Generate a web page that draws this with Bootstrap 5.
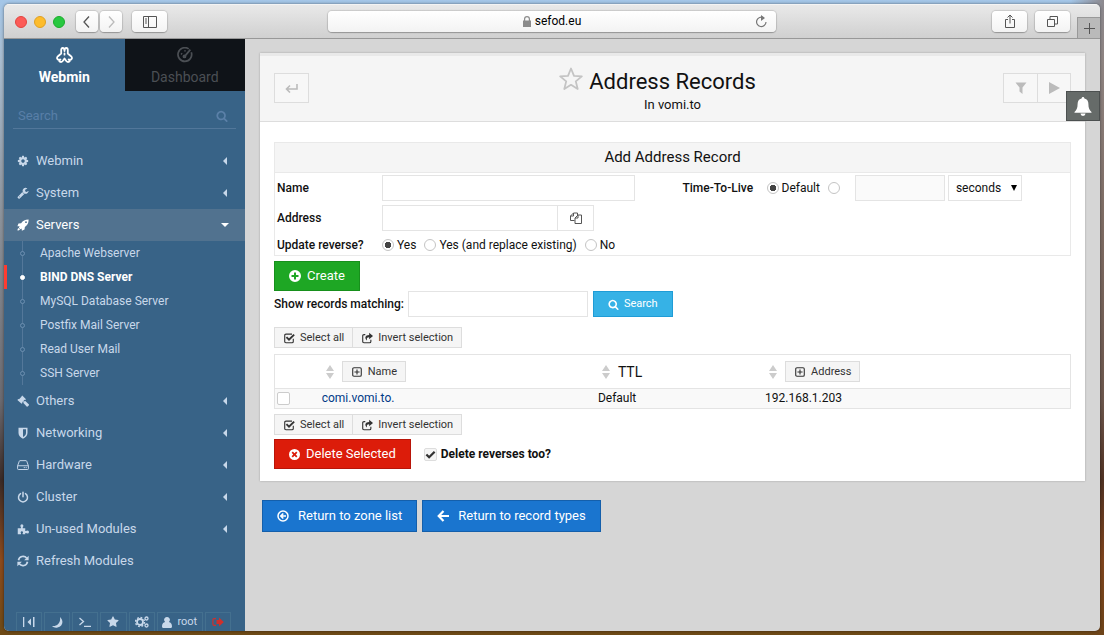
<!DOCTYPE html>
<html lang="en">
<head>
<meta charset="utf-8">
<meta name="viewport" content="width=device-width, initial-scale=1">
<title>Address Records</title>
<link href="https://cdn.jsdelivr.net/npm/bootstrap@5.3.0/dist/css/bootstrap.min.css" rel="stylesheet">
<style>
  body { font-family: Roboto, "Liberation Sans", sans-serif; font-size: 12px; line-height: 20px; color: #111; padding: 4px;
    background: linear-gradient(90deg, transparent 97%, rgba(110,60,30,.45) 100%), linear-gradient(180deg, #a4c6e8 0, #a9bdd0 60px, #8b9199 220px, #6b6a70 400px, #3a2a26 480px, #8c4a1c 560px, #6d4a16 100%); }
  .ico { width: 1em; height: 1em; fill: currentColor; flex: none; }
  .ico-11 { width: 11px; height: 11px; }
  .ico-12 { width: 12px; height: 12px; }
  .line-ico { fill: none; stroke: currentColor; }
  .win { min-height: calc(100vh - 8px); border-radius: 5px; overflow: hidden; background: #d6d6d6; box-shadow: 0 0 3px rgba(0,0,0,.5); }
  .side-even { flex: 1 1 0; }

  /* browser toolbar */
  .chrome { height: 35px; padding: 0 11px; background: linear-gradient(#e9e9e9, #d0d0d0); border-top: 1px solid #f4f4f4; border-bottom: 1px solid #989898; }
  .lights { gap: 7px; margin-right: 11px; }
  .light { width: 12px; height: 12px; border-radius: 50%; border: 1px solid; }
  .light-red { background: #fc5b57; border-color: #e2443f; }
  .light-amber { background: #fdbc2c; border-color: #dfa023; }
  .light-green { background: #28c840; border-color: #1bac2c; }
  .tool { width: 35px; height: 21px; padding: 0; border: 0; border-radius: 4px; color: #555; background: linear-gradient(#fff, #f3f3f3); box-shadow: 0 0 1px 1px rgba(0,0,0,.12), 0 1px 1px rgba(0,0,0,.2); display: flex; align-items: center; justify-content: center; }
  .tool-nav { width: 22px; font-size: 12px; }
  .tool-nav.faded { color: #bbb; }
  .nav-pair { gap: 2px; margin-right: 10px; }
  .address { width: 448px; font-size: 12px; line-height: 21px; color: #000; }
  .tools-end .tool:last-child { margin-right: 19px; }
  .newtab { width: 23px; height: 21px; padding: 0; border: 1px solid #999; border-width: 1px 0 0 1px; background: #bababa; color: #555; }

  /* sidebar */
  .side { width: 241px; flex: none; background: #386387; color: #c8d8ea; font-size: 13px; }
  .side a { color: inherit; text-decoration: none; }
  .side-tab { height: 52px; width: 50%; font-size: 14px; }
  .side-tab.off { background: #0f1318; color: #4b4f54; }
  .side-tab.on { color: #fff; font-weight: 700; }
  .side-search { margin: 13px 9px 0; height: 25px; border-bottom: 1px solid #52779a; color: #5b80a8; }
  .side-search input { background: none; border: 0; outline: 0; min-width: 0; font-size: 13px; padding: 0 0 0 5px; color: #fff; }
  .side-search input::placeholder { color: #587fa8; opacity: 1; }
  .menu-row { height: 32px; padding: 0 16px 0 13px; gap: 7px; }
  .menu-row .ico { width: 12px; height: 12px; }
  .menu-row .caret { width: 8px; height: 8px; margin-left: auto; }
  .menu-row.open { background: #51728f; color: #fff; }
  .submenu a { height: 24px; padding-left: 16px; gap: 15px; font-size: 12px; border-left: 3px solid transparent; background: linear-gradient(#54789a, #54789a) 15px 0 / 1px 100% no-repeat; }
  .submenu a::before { content: ""; width: 5px; height: 5px; margin-left: -3px; border: 1px solid #6c8fb0; border-radius: 50%; background: #386387; flex: none; }
  .submenu a.now { color: #fff; font-weight: 700; border-left-color: #ff3b30; }
  .submenu a.now::before { background: #fff; border-color: #fff; }
  .side-foot { padding: 0 14px 0 12px; gap: 2px; }
  .side-foot button { height: 19px; padding: 0; flex: 1 1 26px; border: 1px solid #44708f; border-bottom: 0; background: none; color: #c8d8ea; font-size: 11px; line-height: 18px; display: flex; align-items: center; justify-content: center; gap: 5px; }
  .side-foot button.wide { flex-basis: 46px; }
  .side-foot button.leave { color: #d0302c; }

  /* page */
  .page { padding: 14px 15px 20px; min-width: 0; }
  .panel { background: #fff; border: 0; border-radius: 0; box-shadow: 0 0 2px rgba(0,0,0,.25); }
  .panel-head { height: 69px; padding: 17px 14px 0; background: #f5f5f5; border-top: 3px solid #e9e9e9; border-bottom: 1px solid #ddd; display: grid; grid-template-columns: 1fr auto 1fr; gap: 6px; }
  .panel-head h1 { font-size: 22px; line-height: 26px; font-weight: 400; margin: -4px 0 0; }
  .panel-head p { font-size: 13px; line-height: 20px; margin: 0; }
  .fav { margin-top: -6px; }
  .ghost { height: 30px; width: 35px; padding: 0; border: 1px solid #ddd; background: #f7f7f7; color: #bbb; border-radius: 0; display: flex; align-items: center; justify-content: center; }
  .ghost + .ghost { width: 33px; }
  .panel-main { padding: 20px 14px 12px; }
  .box { border: 1px solid #e9e9e9; }
  .box-head { font-size: 15px; line-height: 29px; background: #f5f5f5; border-bottom: 1px solid #e9e9e9; margin: 0; font-weight: 400; text-align: center; }
  .form-side { padding: 2px 0 0 2px; display: flex; flex-direction: column; gap: 4px; }
  .form-side.second { padding-left: 10px; }
  .key { font-weight: 500; }
  .key-col { width: 105px; flex: none; }
  .key-ttl { width: 84px; flex: none; }
  .field { height: 26px; border: 1px solid #e4e4e4; border-radius: 0; background: #fff; padding: 0 6px; min-width: 0; color: #111; font-size: 12px; }
  .field:disabled { background: #fafafa; }
  .w-name { width: 253px; }
  .w-addr { width: 176px; }
  .w-pick { width: 36px; }
  .w-time { width: 90px; margin: 0 3px 0 12px; }
  .w-match { width: 180px; margin-right: 5px; }
  select.field { appearance: none; width: 74px; padding: 0 7px; background: #fff url("data:image/svg+xml,%3Csvg xmlns='http://www.w3.org/2000/svg' viewBox='0 0 6 6'%3E%3Cpath d='M0 0h6L3 6z'/%3E%3C/svg%3E") right 4px center / 6px 6px no-repeat; }
  input[type=radio] { appearance: none; width: 12px; height: 12px; margin: 0 3px 0 0; border: 1px solid #c4c4c4; border-radius: 50%; background: #fff; flex: none; }
  input[type=radio]:checked { background: radial-gradient(circle, #444 0 3px, #fff 3px); }
  input[type=checkbox] { appearance: none; width: 13px; height: 13px; margin: 0; border: 1px solid #ccc; border-radius: 2px; background: #fff; flex: none; }
  input[type=checkbox]:checked { border-color: #ddd; background: #f5f5f5 url("data:image/svg+xml,%3Csvg xmlns='http://www.w3.org/2000/svg' viewBox='0 0 12 12'%3E%3Cpath d='M1.500 6l3 3 6-6' fill='none' stroke='%23333' stroke-width='2.500'/%3E%3C/svg%3E") center / 11px 11px no-repeat; }
  .act { border-radius: 0; padding: 0 14px; height: 30px; font-size: 13px; line-height: 20px; color: #fff; display: inline-flex; align-items: center; gap: 6px; border: 1px solid; }
  .act:hover { color: #fff; }
  .act-green { background: #1ea724; border-color: #17901c; margin-top: 5px; }
  .act-red { background: #dc1c0a; border-color: #b81509; }
  .act-sky { background: #36b2e6; border-color: #1f9cd6; height: 26px; font-size: 11px; gap: 5px; }
  .act-blue { background: #1a75cf; border-color: #145fab; height: 32px; gap: 9px; }
  .mini { border-radius: 0; border: 1px solid #ddd; background: #f5f5f5; color: #333; height: 21px; padding: 0 8px; font-size: 11px; line-height: 19px; display: inline-flex; align-items: center; gap: 5px; }
  .mini .ico { width: 12px; height: 12px; }
  .picks { margin-top: 10px; }
  .records { --bs-table-bg: transparent; margin: 6px 0 5px; border: 1px solid #e4e4e4; font-size: 12px; table-layout: fixed; color: #111; }
  .records > :not(caption) > * > * { padding: 0 5px; border-color: #e4e4e4; }
  .records th { height: 34px; font-weight: 400; font-size: 14px; vertical-align: middle; }
  .records td { height: 20px; background: #f9f9f9; line-height: 19px; }
  .records td:first-child { padding-left: 2px; }
  .records a { color: #003a87; text-decoration: none; }
  .col-pick { width: 5.300%; } .col-name { width: 34.700%; } .col-ttl { width: 21%; }
  .sort { width: 8px; height: 14px; fill: #ccc; flex: none; }
  .too { margin-left: 13px; gap: 4px; }
  .returns { gap: 5px; padding-left: 2px; margin-top: 19px; }
  .bell { position: absolute; right: 0; top: 87px; width: 34px; height: 30px; padding: 0; border: 1px solid #4c5050; background: #666b69; color: #fff; z-index: 2; }
</style>
</head>
<body>
<svg class="d-none" xmlns="http://www.w3.org/2000/svg">
  <symbol id="cog" viewBox="0 0 1792 1792"><path d="M1152 896q0-106-75-181t-181-75-181 75-75 181 75 181 181 75 181-75 75-181zm512-109v222q0 12-8 23t-20 13l-185 28q-19 54-39 91 35 50 107 138 10 12 10 25t-9 23q-27 37-99 108t-94 71q-12 0-26-9l-138-108q-44 23-91 38-16 136-29 186-7 28-36 28h-222q-14 0-24.500-8.500t-11.500-21.500l-28-184q-49-16-90-37l-141 107q-10 9-25 9-14 0-25-11-126-114-165-168-7-10-7-23 0-12 8-23 15-21 51-66.500t54-70.500q-27-50-41-99l-183-27q-13-2-21-12.500t-8-23.500v-222q0-12 8-23t19-13l186-28q14-46 39-92-40-57-107-138-10-12-10-24 0-10 9-23 26-36 98.500-107.500t94.500-71.500q13 0 26 10l138 107q44-23 91-38 16-136 29-186 7-28 36-28h222q14 0 24.500 8.500t11.500 21.500l28 184q49 16 90 37l142-107q9-9 24-9 13 0 25 10 129 119 165 170 7 8 7 22 0 12-8 23-15 21-51 66.500t-54 70.500q26 50 41 98l183 28q13 2 21 12.500t8 23.500z"/></symbol>
  <symbol id="wrench" viewBox="0 0 1792 1792"><path d="M448 1472q0-26-19-45t-45-19-45 19-19 45 19 45 45 19 45-19 19-45zm644-420l-682 682q-37 37-90 37-52 0-91-37l-106-108q-38-36-38-90 0-53 38-91l681-681q39 98 114.500 173.500t173.500 114.500zm634-435q0 39-23 106-47 134-164.500 217.500t-258.500 83.500q-185 0-316.500-131.500t-131.500-316.500 131.500-316.500 316.500-131.500q58 0 121.500 16.500t107.500 46.500q16 11 16 28t-16 28l-293 169v224l193 107q5-3 79-48.500t135.500-81 70.500-35.500q15 0 23.500 10t8.500 25z"/></symbol>
  <symbol id="search" viewBox="0 0 1792 1792"><path d="M1216 832q0-185-131.500-316.500t-316.500-131.500-316.500 131.500-131.500 316.500 131.500 316.500 316.500 131.500 316.500-131.500 131.500-316.500zm512 832q0 52-38 90t-90 38q-54 0-90-38l-343-342q-179 124-399 124-143 0-273.500-55.500t-225-150-150-225-55.500-273.500 55.500-273.500 150-225 225-150 273.500-55.500 273.500 55.500 225 150 150 225 55.500 273.500q0 220-124 399l343 343q37 37 37 90z"/></symbol>
  <symbol id="star" viewBox="0 0 1792 1792"><path d="M1728 647q0 22-26 48l-363 354 86 500q1 7 1 20 0 21-10.500 35.500t-30.500 14.500q-19 0-40-12l-449-236-449 236q-22 12-40 12-21 0-31.500-14.500t-10.500-35.500q0-6 2-20l86-500-364-354q-25-27-25-48 0-37 56-46l502-73 225-455q19-41 49-41t49 41l225 455 502 73q56 9 56 46z"/></symbol>
  <symbol id="rocket" viewBox="0 0 16 16"><path fill-rule="evenodd" d="M15.500.5c-5 0-7.500 1.500-10 5L2 6 .5 9.500l3 .3-1 1.700 2 2 1.700-1 .3 3L10 14l.5-3.500C14 8 15.500 5.500 15.500.5zM12 3a1.200 1.200 0 1 1 0 2.400A1.200 1.200 0 0 1 12 3zM2 12c-1 .7-1.300 2-1.300 3.300C2 15.300 3.300 15 4 14z"/></symbol>
  <symbol id="gavel" viewBox="0 0 16 16"><path d="M7 .5 12 5.500l-1.200 1.200-.8-.3-1.200 1.200.9.9 1-.9L16 12.700c.4 1-1.800 3.200-2.800 2.800L8.200 10.300l.9-1-.9-.9L7 9.600l.3.900-1.200 1.200L.5 6.500l1.200-1.200 1 .3L6.200 2 5.900 1.500z"/></symbol>
  <symbol id="shield" viewBox="0 0 16 16"><path fill-rule="evenodd" d="M2 1h12v7c0 4-3 6-6 7.500C5 14 2 12 2 8zm6 2v10.200C10.500 12 12 10.300 12 8V3z"/></symbol>
  <symbol id="disk" viewBox="0 0 16 16"><path fill="none" stroke="currentColor" stroke-width="1.300" d="M.8 9 3 3q.3-.8 1-.8h8q.7 0 1 .8l2.200 6v4q0 1-1 1H1.800q-1 0-1-1zm0 0h14.400M9 11.500h1.500m1 0H13"/></symbol>
  <symbol id="power" viewBox="0 0 16 16"><path fill="none" stroke="currentColor" stroke-width="2" stroke-linecap="round" d="M8 1.500v6M4.700 3.500a6 6 0 1 0 6.600 0"/></symbol>
  <symbol id="puzzle" viewBox="0 0 16 16"><path d="M1 7h4.200C6 6 4.500 5 4.500 3.500a2 2 0 0 1 4 0C8.500 5 7 6 7.800 7H11v3.500c1 .8 2-.5 3-.5a2 2 0 0 1 0 4c-1 0-2-1.300-3-.5V15H7.800c-1-1 .3-1.700.3-2.700a1.700 1.700 0 0 0-3.300 0c0 1 1.300 1.700.3 2.700H1z"/></symbol>
  <symbol id="refresh" viewBox="0 0 16 16"><path fill="none" stroke="currentColor" stroke-width="2.200" d="M2 7a6.200 6.200 0 0 1 11-2.800M14 9a6.200 6.200 0 0 1-11 2.800"/><path d="M15.500 1v6h-6zM.5 15V9h6z"/></symbol>
  <symbol id="left" viewBox="0 0 8 8"><path d="M6 0v8L2 4z"/></symbol>
  <symbol id="down" viewBox="0 0 8 8"><path d="M0 2h8L4 6z"/></symbol>
  <symbol id="updown" viewBox="0 0 8 14"><path d="M0 6h8L4 0zM0 8h8l-4 6z"/></symbol>
  <symbol id="check" viewBox="0 0 14 14"><path fill="none" stroke="currentColor" stroke-width="1.300" d="M12 8v3q0 1.500-1.500 1.500h-7Q2 12.500 2 11V4q0-1.500 1.500-1.500h7"/><path fill="none" stroke="currentColor" stroke-width="2.200" d="m4 6 3 3 6-6"/></symbol>
  <symbol id="invert" viewBox="0 0 14 14"><path fill="none" stroke="currentColor" stroke-width="1.300" d="M11.500 9v2q0 1.500-1.500 1.500H3.500Q2 12.500 2 11V4.500Q2 3 3.500 3H5"/><path d="M9.500 1 14 4.700 9.500 8.400V6C7 6 6.500 7 7 10 4 7 4.500 3.500 9.500 3.400z"/></symbol>
  <symbol id="plusbox" viewBox="0 0 14 14"><path fill="none" stroke="currentColor" stroke-width="1.300" d="M3.500 2h7Q12 2 12 3.500v7q0 1.500-1.500 1.500h-7Q2 12 2 10.500v-7Q2 2 3.500 2zM7 4v6M4 7h6"/></symbol>
</svg>

<div class="win d-flex flex-column position-relative">
  <header class="chrome d-flex align-items-center flex-shrink-0 position-relative">
    <div class="side-even d-flex align-items-center">
      <div class="lights d-flex">
        <span class="light light-red"></span>
        <span class="light light-amber"></span>
        <span class="light light-green"></span>
      </div>
      <div class="nav-pair d-flex">
        <button class="tool tool-nav" aria-label="Back"><svg class="ico line-ico" viewBox="0 0 12 12" stroke-width="1.300"><path d="M8 .5 3 6l5 5.500"/></svg></button>
        <button class="tool tool-nav faded" aria-label="Forward"><svg class="ico line-ico" viewBox="0 0 12 12" stroke-width="1.300"><path d="m4 .5 5 5.500-5 5.500"/></svg></button>
      </div>
      <button class="tool" aria-label="Sidebar"><svg width="14" height="12" viewBox="0 0 14 12" fill="none" stroke="currentColor"><path d="M.5.5h13v11H.5zm5 0v11M2 3h2M2 5h2M2 7h2"/></svg></button>
    </div>
    <div class="tool address px-2">
      <span class="side-even"></span>
      <svg class="me-1" width="8" height="11" viewBox="0 0 8 11" fill="#8b8b8b"><path fill-rule="evenodd" d="M0 4.500h1V3a3 3 0 0 1 6 0v1.500h1V11H0zm2.200 0h3.600V3a1.800 1.800 0 0 0-3.600 0z"/></svg>
      <span>sefod.eu</span>
      <span class="side-even d-flex justify-content-end"><svg width="13" height="13" viewBox="0 0 13 13" fill="none" stroke="#777" stroke-width="1.200"><path d="M8.500 2.700A4.700 4.700 0 1 0 11 7"/><path fill="#777" stroke="none" d="m6 0 4 3-4 3z"/></svg></span>
    </div>
    <div class="side-even tools-end d-flex gap-2 justify-content-end">
      <button class="tool" aria-label="Share"><svg width="12" height="15" viewBox="0 0 12 15" fill="none" stroke="currentColor"><path d="M4 5.500H1.500v8h9v-8H8M6 9.500V1M3.500 3.500 6 1l2.500 2.500"/></svg></button>
      <button class="tool" aria-label="Tabs"><svg width="13" height="13" viewBox="0 0 13 13" fill="none" stroke="currentColor"><path d="M1.500 4.500h7v7h-7zm2.500 0v-3h7.500v7.500h-3"/></svg></button>
    </div>
    <button class="newtab d-flex align-items-center justify-content-center position-absolute bottom-0 end-0" aria-label="New tab"><svg width="11" height="11" viewBox="0 0 11 11" stroke="currentColor"><path d="M5.500 0v11M0 5.500h11"/></svg></button>
  </header>
  <button class="bell d-flex align-items-center justify-content-center" aria-label="Notifications"><svg width="18" height="19" viewBox="0 0 18 19" fill="currentColor"><path d="M9 0c.8 0 1.400.6 1.400 1.500 3 .7 4 3 4 5.500 0 4 1 6 3.100 8v.8h-17V15c2.100-2 3.100-4 3.100-8 0-2.500 1-4.800 4-5.500C7.600.6 8.200 0 9 0zM6.500 16.500h5a2.500 2.500 0 0 1-5 0z"/></svg></button>

  <div class="d-flex flex-grow-1">
    <nav class="side d-flex flex-column">
      <div class="d-flex">
        <a href="#" class="side-tab on d-flex flex-column align-items-center pt-2"><svg width="17" height="16" viewBox="0 0 17 16" fill="none" stroke="#fff" stroke-width="1.800" stroke-linejoin="round" stroke-linecap="round"><path d="M5.200 6.500V3Q5.200 1 6.700 1 8.500 1 8.500 4 8.500 1 10.300 1q1.500 0 1.500 2v3.500l3.200 2.700q1.500 1.400.6 2.700t-3 .6q2 1.500.4 2.300-1.500.7-2.700-.8L8.500 11.500 6.700 14q-1.200 1.500-2.700.8-1.600-.8.4-2.300-2.100.7-3-.6T2 9.200zM8.500 6.500v1.200"/></svg><span class="mt-1">Webmin</span></a>
        <a href="#" class="side-tab off d-flex flex-column align-items-center pt-2"><svg width="16" height="16" viewBox="0 0 15 15" fill="none" stroke="currentColor" stroke-width="1.600"><path d="M11 1.800A6.400 6.400 0 1 0 13.400 5M7 9l5.500-6.500M3.800 6l1 .8M7.500 3v1.200"/><circle cx="7" cy="8.800" r="1"/></svg><span class="mt-1">Dashboard</span></a>
      </div>
      <div class="side-search d-flex align-items-center justify-content-between pe-2">
        <input type="search" placeholder="Search" aria-label="Search">
        <svg class="ico ico-12"><use href="#search"/></svg>
      </div>
      <div class="mt-3 pb-2">
        <a href="#" class="menu-row d-flex align-items-center"><svg class="ico"><use href="#cog"/></svg>Webmin<svg class="ico caret"><use href="#left"/></svg></a>
        <a href="#" class="menu-row d-flex align-items-center"><svg class="ico"><use href="#wrench"/></svg>System<svg class="ico caret"><use href="#left"/></svg></a>
        <a href="#" class="menu-row open d-flex align-items-center"><svg class="ico"><use href="#rocket"/></svg>Servers<svg class="ico caret"><use href="#down"/></svg></a>
        <div class="submenu">
          <a href="#" class="d-flex align-items-center">Apache Webserver</a>
          <a href="#" class="d-flex align-items-center now">BIND DNS Server</a>
          <a href="#" class="d-flex align-items-center">MySQL Database Server</a>
          <a href="#" class="d-flex align-items-center">Postfix Mail Server</a>
          <a href="#" class="d-flex align-items-center">Read User Mail</a>
          <a href="#" class="d-flex align-items-center">SSH Server</a>
        </div>
        <a href="#" class="menu-row d-flex align-items-center"><svg class="ico"><use href="#gavel"/></svg>Others<svg class="ico caret"><use href="#left"/></svg></a>
        <a href="#" class="menu-row d-flex align-items-center"><svg class="ico"><use href="#shield"/></svg>Networking<svg class="ico caret"><use href="#left"/></svg></a>
        <a href="#" class="menu-row d-flex align-items-center"><svg class="ico"><use href="#disk"/></svg>Hardware<svg class="ico caret"><use href="#left"/></svg></a>
        <a href="#" class="menu-row d-flex align-items-center"><svg class="ico"><use href="#power"/></svg>Cluster<svg class="ico caret"><use href="#left"/></svg></a>
        <a href="#" class="menu-row d-flex align-items-center"><svg class="ico"><use href="#puzzle"/></svg>Un-used Modules<svg class="ico caret"><use href="#left"/></svg></a>
        <a href="#" class="menu-row d-flex align-items-center"><svg class="ico"><use href="#refresh"/></svg>Refresh Modules</a>
      </div>
      <div class="side-foot d-flex mt-auto">
        <button aria-label="Collapse"><svg width="12" height="10" viewBox="0 0 12 10" fill="currentColor"><path d="M0 0h1.300v10H0zm10 0h1.500v10H10zM8 1.500v7L4.500 5z"/></svg></button>
        <button aria-label="Night mode"><svg width="11" height="11" viewBox="0 0 11 11" fill="currentColor"><path d="M8 0c4 3.500 3 9.500-2.500 10.500C3.500 11 1.500 10.500 0 9c5 .7 9-3 8-9z"/></svg></button>
        <button aria-label="Terminal"><svg width="12" height="10" viewBox="0 0 12 10" fill="none" stroke="currentColor" stroke-width="1.300"><path d="m.5 1 4 3.500-4 3.500M5 9.300h7"/></svg></button>
        <button aria-label="Favorites"><svg class="ico ico-12"><use href="#star"/></svg></button>
        <button aria-label="Settings"><svg width="14" height="12" viewBox="0 0 14 12" fill="none" stroke="currentColor"><circle cx="5" cy="6" r="3" stroke-width="1.800"/><circle cx="5" cy="6" r="4.500" stroke-width="1.400" stroke-dasharray="1.800 1.730"/><circle cx="11.500" cy="2.500" r="1.500" stroke-width="1.300"/><circle cx="11.500" cy="9.500" r="1.500" stroke-width="1.300"/></svg></button>
        <button class="wide"><svg width="10" height="11" viewBox="0 0 10 11" fill="currentColor"><path d="M5 0a2.800 2.800 0 0 1 1.800 5C9 5.500 10 7 10 9.500q0 1.500-1.500 1.500h-7Q0 11 0 9.500C0 7 1 5.500 3.200 5A2.800 2.800 0 0 1 5 0z"/></svg>root</button>
        <button class="leave" aria-label="Log out"><svg width="12" height="10" viewBox="0 0 12 10" fill="currentColor"><path d="M4 1v1.200H2Q1.500 2.200 1.500 3v4q0 .8.500.8h2V9H2Q.3 9 .3 7V3Q.3 1 2 1zm3-.5L11.800 5 7 9.500V7H4.500V3H7z"/></svg></button>
      </div>
    </nav>

    <main class="page flex-grow-1">
      <section class="panel card">
        <div class="panel-head">
          <div class="d-flex justify-content-between align-items-start">
            <button class="ghost" aria-label="Back"><svg width="13" height="9" viewBox="0 0 13 9" fill="none" stroke="currentColor" stroke-width="1.600"><path d="M12 0v5H1.500M5 1.500 1.500 5 5 8.500"/></svg></button>
            <svg class="fav" width="24" height="24" viewBox="0 0 24 24" fill="none" stroke="#c4c4c4" stroke-width="1.800" stroke-linejoin="round"><path d="m12 1.500 3 7.300 7.800.6-6 5 1.900 7.600-6.700-4.200L5.300 22l1.900-7.600-6-5 7.800-.6z"/></svg>
          </div>
          <div class="text-center"><h1>Address Records</h1><p>In vomi.to</p></div>
          <div class="d-flex justify-content-end align-items-start">
            <button class="ghost" aria-label="Filter"><svg width="12" height="12" viewBox="0 0 12 12" fill="currentColor"><path d="M.5.500h11L7.500 5.500V12l-3-2.500v-4z"/></svg></button>
            <button class="ghost border-start-0" aria-label="Apply"><svg width="11" height="12" viewBox="0 0 11 12" fill="currentColor"><path d="m0 0 11 6-11 6z"/></svg></button>
          </div>
        </div>
        <div class="panel-main">
          <form>
            <div class="box">
              <h2 class="box-head">Add Address Record</h2>
              <div class="row g-0">
                <div class="col-6 form-side">
                  <div class="d-flex align-items-center"><label class="key key-col" for="name">Name</label><input id="name" class="field w-name"></div>
                  <div class="d-flex align-items-center"><label class="key key-col" for="addr">Address</label><input id="addr" class="field w-addr"><button type="button" class="field w-pick border-start-0 d-flex align-items-center justify-content-center" aria-label="Choose address"><svg width="12" height="12" viewBox="0 0 12 12" fill="none" stroke="#555"><path d="M4.500 8.500h-4V4L3.500 1h4v2M3.500 1v3h-3M5 6l3-3h3.500v8.500H5zm3-3v3H5"/></svg></button></div>
                  <div class="d-flex align-items-center"><span class="key key-col">Update reverse?</span>
                    <label class="d-flex align-items-center me-2"><input type="radio" name="rev" checked>Yes</label>
                    <label class="d-flex align-items-center me-2"><input type="radio" name="rev">Yes (and replace existing)</label>
                    <label class="d-flex align-items-center"><input type="radio" name="rev">No</label>
                  </div>
                </div>
                <div class="col-6 form-side second">
                  <div class="d-flex align-items-center"><span class="key key-ttl">Time-To-Live</span>
                    <label class="d-flex align-items-center me-2"><input type="radio" name="ttl" checked>Default</label>
                    <input type="radio" name="ttl" aria-label="Custom time">
                    <input class="field w-time" disabled aria-label="Time value">
                    <select class="field" aria-label="Time unit"><option>seconds</option><option>minutes</option><option>hours</option></select>
                  </div>
                </div>
              </div>
            </div>
            <button type="button" class="btn act act-green"><svg class="ico ico-12" viewBox="0 0 12 12"><path fill-rule="evenodd" d="M6 0a6 6 0 1 1 0 12A6 6 0 0 1 6 0zM5 2.500V5H2.500v2H5v2.500h2V7h2.500V5H7V2.500z"/></svg>Create</button>
          </form>
          <form class="d-flex align-items-center">
            <label class="key me-1" for="match">Show records matching:</label>
            <input id="match" class="field w-match">
            <button type="button" class="btn act act-sky"><svg class="ico ico-11"><use href="#search"/></svg>Search</button>
          </form>
          <div class="picks d-flex">
            <button class="mini border-end-0"><svg class="ico"><use href="#check"/></svg>Select all</button>
            <button class="mini"><svg class="ico"><use href="#invert"/></svg>Invert selection</button>
          </div>
          <table class="table records align-middle">
            <colgroup><col class="col-pick"><col class="col-name"><col class="col-ttl"><col></colgroup>
            <thead><tr>
              <th aria-label="Selected"></th>
              <th><div class="d-flex align-items-center gap-2 ps-1"><svg class="sort"><use href="#updown"/></svg><button class="mini"><svg class="ico"><use href="#plusbox"/></svg>Name</button></div></th>
              <th><div class="d-flex align-items-center gap-2 ps-1"><svg class="sort"><use href="#updown"/></svg>TTL</div></th>
              <th><div class="d-flex align-items-center gap-2 ps-1"><svg class="sort"><use href="#updown"/></svg><button class="mini"><svg class="ico"><use href="#plusbox"/></svg>Address</button></div></th>
            </tr></thead>
            <tbody><tr>
              <td><input type="checkbox" class="d-block" aria-label="Select comi.vomi.to."></td>
              <td><a href="#">comi.vomi.to.</a></td><td>Default</td><td>192.168.1.203</td>
            </tr></tbody>
          </table>
          <div class="d-flex mb-1">
            <button class="mini border-end-0"><svg class="ico"><use href="#check"/></svg>Select all</button>
            <button class="mini"><svg class="ico"><use href="#invert"/></svg>Invert selection</button>
          </div>
          <div class="d-flex align-items-center">
            <button class="btn act act-red"><svg class="ico ico-11" viewBox="0 0 12 12"><path fill-rule="evenodd" d="M6 0a6 6 0 1 1 0 12A6 6 0 0 1 6 0zM4.200 2.800 2.800 4.200 4.600 6 2.800 7.800l1.400 1.400L6 7.400l1.800 1.800 1.400-1.400L7.400 6l1.800-1.800-1.400-1.400L6 4.600z"/></svg>Delete Selected</button>
            <label class="too d-flex align-items-center fw-bold"><input type="checkbox" checked>Delete reverses too?</label>
          </div>
        </div>
      </section>
      <div class="returns d-flex">
        <a href="#" class="btn act act-blue"><svg class="ico ico-12" viewBox="0 0 12 12"><g fill="none" stroke="#fff"><circle cx="6" cy="6" r="5" stroke-width="1.500"/><path d="M9 6H4m2.300-2.500L3.800 6l2.500 2.500" stroke-width="1.600"/></g></svg>Return to zone list</a>
        <a href="#" class="btn act act-blue"><svg class="ico ico-12" viewBox="0 0 12 12"><path fill="none" stroke="#fff" stroke-width="2.200" d="M12 6H2m4.500-5L1.700 6l4.800 5"/></svg>Return to record types</a>
      </div>
    </main>
  </div>
</div>
<script src="https://cdn.jsdelivr.net/npm/bootstrap@5.3.0/dist/js/bootstrap.bundle.min.js"></script>
</body>
</html>
